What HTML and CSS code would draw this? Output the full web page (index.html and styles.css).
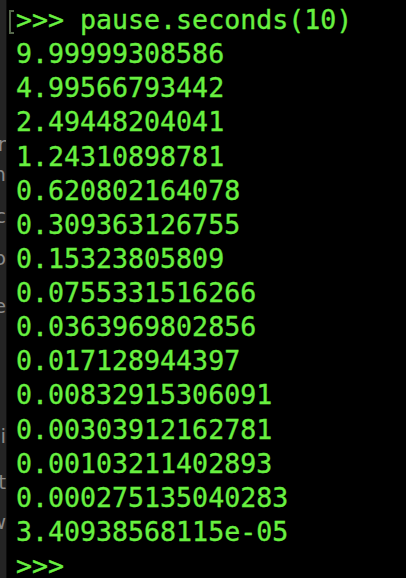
FILE: index.html
```html
<!DOCTYPE html>
<html>
<head>
<meta charset="utf-8">
<link rel="stylesheet" href="styles.css">
</head>
<body>
<div class="screen">
  <div class="behind">
    <div class="frag f1">r</div>
    <div class="frag f2">n</div>
    <div class="frag f3">c</div>
    <div class="frag f4">o</div>
    <div class="frag f5">e</div>
    <div class="frag f6">li</div>
    <div class="frag f7">t</div>
    <div class="frag f8">w</div>
  </div>
  <div class="term">
    <div class="line prompt"><span class="mark"></span>&gt;&gt;&gt; pause.seconds(10)</div>
    <div class="line">9.99999308586</div>
    <div class="line">4.99566793442</div>
    <div class="line">2.49448204041</div>
    <div class="line">1.24310898781</div>
    <div class="line">0.620802164078</div>
    <div class="line">0.309363126755</div>
    <div class="line">0.15323805809</div>
    <div class="line">0.0755331516266</div>
    <div class="line">0.0363969802856</div>
    <div class="line">0.017128944397</div>
    <div class="line">0.00832915306091</div>
    <div class="line">0.00303912162781</div>
    <div class="line">0.00103211402893</div>
    <div class="line">0.000275135040283</div>
    <div class="line">3.40938568115e-05</div>
    <div class="line">&gt;&gt;&gt;</div>
  </div>
</div>
</body>
</html>
```

FILE: styles.css
```css
html, body {
  margin: 0;
  padding: 0;
  background: #000;
}
.screen {
  width: 406px;
  height: 578px;
  overflow: hidden;
  display: flex;
  background: #000;
}
.behind {
  width: 6px;
  flex: 0 0 6px;
  background: #242424;
  border-right: 1px solid #0e0e0e;
  overflow: hidden;
  display: flex;
  flex-direction: column;
  align-items: flex-end;
  font-family: "DejaVu Sans", sans-serif;
  font-size: 20px;
  color: #8a8a8a;
  line-height: 20px;
}
.frag {
  display: flex;
  justify-content: flex-end;
  width: 6px;
  overflow: hidden;
  white-space: nowrap;
}
.f1 { margin-top: 134px; }
.f2 { margin-top: 10px; }
.f3 { margin-top: 22px; }
.f4 { margin-top: 22px; }
.f5 { margin-top: 28px; }
.f6 { margin-top: 110px; }
.f7 { margin-top: 26px; }
.f8 { margin-top: 20px; }
.term {
  flex: 1;
  padding: 3px 0 0 9px;
  font-family: "DejaVu Sans Mono", "Liberation Mono", monospace;
  font-size: 26.6px;
  line-height: 34.13px;
  color: #68f040;
  -webkit-text-stroke: 0.35px #68f040;
}
.line {
  height: 34.13px;
  white-space: pre;
}
.prompt {
  position: relative;
}
.mark {
  position: absolute;
  left: -7px;
  top: 7px;
  width: 3px;
  height: 20px;
  border: 2px solid #56684c;
  border-right: none;
}
```
